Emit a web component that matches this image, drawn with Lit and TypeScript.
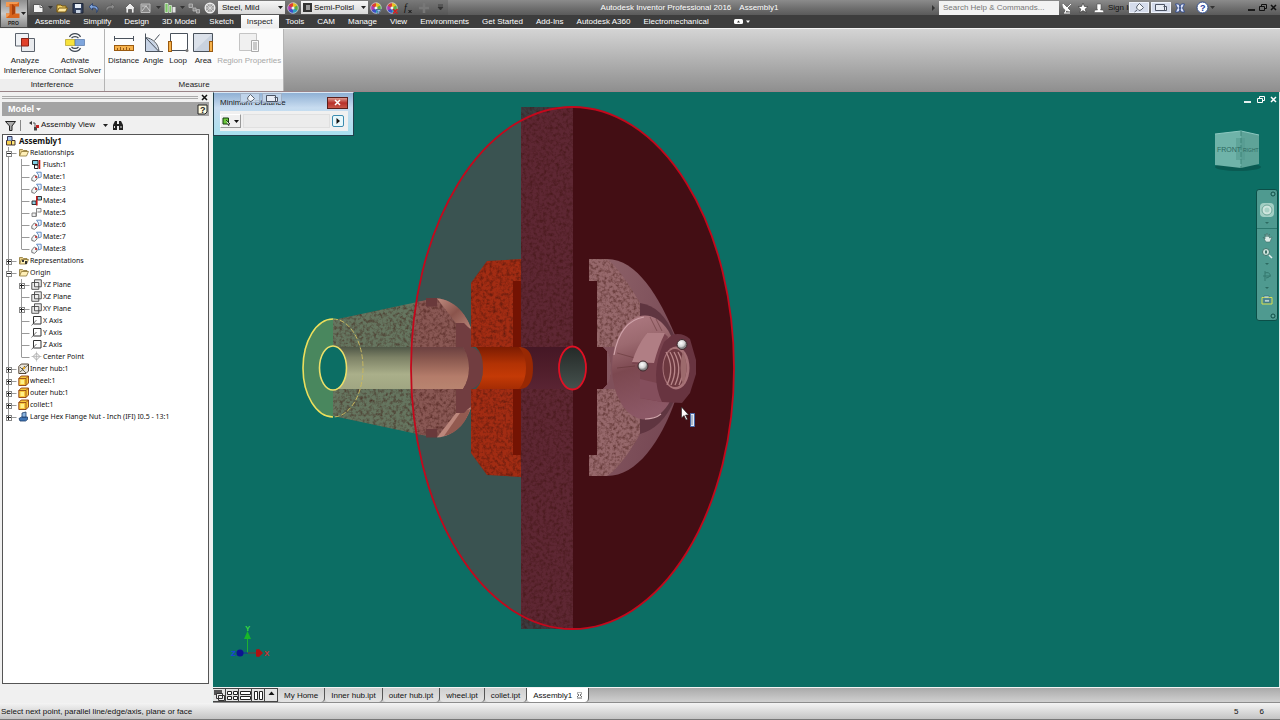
import { LitElement, html, svg, css, type TemplateResult, type SVGTemplateResult } from "lit";
import { customElement } from "lit/decorators.js";
import { classMap } from "lit/directives/class-map.js";

type Glyph = SVGTemplateResult;

const glyph = (w: number, h: number, body: Glyph) =>
  html`<svg width=${w} height=${h} viewBox="0 0 ${w} ${h}" aria-hidden="true">${body}</svg>`;

const wheel = svg`<path d="M7 7V1.5A5.5 5.5 0 0 1 11.8 4.2Z" fill="#e8c020"/><path d="M7 7L11.8 4.2A5.5 5.5 0 0 1 11.8 9.8Z" fill="#5fb040"/><path d="M7 7L11.8 9.8A5.5 5.5 0 0 1 7 12.5Z" fill="#2fa0c0"/><path d="M7 7V12.5A5.5 5.5 0 0 1 2.2 9.8Z" fill="#3c50c8"/><path d="M7 7L2.2 9.8A5.5 5.5 0 0 1 2.2 4.2Z" fill="#b03ab0"/><path d="M7 7L2.2 4.2A5.5 5.5 0 0 1 7 1.5Z" fill="#e04030"/><circle cx="7" cy="7" r="5.300" fill="none" stroke="#c4ccd6" stroke-width=".8"/><circle cx="7" cy="7" r="1.500" fill="#f4f4f4"/>`;

const quick: { name: string; icon?: Glyph; caret?: boolean; apart?: boolean }[] = [
  { name: "New", icon: svg`<path d="M2.500 3.500h7l2.500 2.500v5.500h-9.500z" fill="#f4f4f4" stroke="#555"/><path d="M9 3.500v3h3" fill="none" stroke="#777"/>` },
  { name: "New options", caret: true },
  { name: "Open", icon: svg`<path d="M2 11V4h4l1 1h4v2" fill="#f3d36b" stroke="#7b5b10"/><path d="M2 11l2-4h8.500l-2 4z" fill="#ffe79a" stroke="#7b5b10"/>` },
  { name: "Save", icon: svg`<path d="M2 2.500h10v9.500H2z" fill="#34425e" stroke="#1c2536"/><path d="M4 3h6v4H4z" fill="#e8eef6"/><path d="M5 9h4.500v3H5z" fill="#c8d4e4"/>` },
  { name: "Undo", icon: svg`<path d="M5.500 2.500L2 5.800l3.500 3.200V7C8.500 6.800 10 8 9.500 11.500 12.500 8 11 4.600 5.500 4.600Z" fill="#7fa4dc" stroke="#243a66" stroke-width=".8"/>` },
  { name: "Redo", icon: svg`<path d="M8.500 2.500L12 5.800 8.500 9V7C5.500 6.800 4 8 4.500 11.500 1.500 8 3 4.600 8.500 4.600Z" fill="#8a8a8a" stroke="#5c5c5c" stroke-width=".8"/>` },
  { name: "Home", apart: true, icon: svg`<path d="M1.500 7.500L7 2l5.500 5.500H11V12H8.500V8.500h-3V12H3V7.500z" fill="#eee" stroke="#555" stroke-width=".8"/>` },
  { name: "Drawing", icon: svg`<path d="M2 3h9v8.500H2z" fill="#888" stroke="#bbb"/><path d="M3 10l4-5 4 5M3 5h5" fill="none" stroke="#ccc"/>` },
  { name: "Drawing options", caret: true },
  { name: "Update", icon: svg`<path d="M2 2.500h3v9H2zM6 4.500h2.500v7H6z" fill="#7cc466" stroke="#e8f4e4" stroke-width=".7"/><path d="M9.500 6h3v5.500h-3z" fill="#e4e4e4"/>` },
  { name: "Update options", caret: true },
  { name: "Select", icon: svg`<path d="M2 3h3.500v3.500H2zM6 7h3v3H6zM9.500 8.500h3V12h-3z" fill="#888" stroke="#bdbdbd" stroke-width=".8"/>` },
  { name: "Material browser", icon: svg`<circle cx="7" cy="7" r="4.800" fill="#9a9a9a" stroke="#eee" stroke-width="1.400"/><path d="M4 4l6 6M10 4L4 10M7 3v8M3 7h8" stroke="#ddd" stroke-width=".8"/>` },
];

const quickAfter: { name: string; icon: Glyph }[] = [
  { name: "Adjust", icon: svg`${wheel}<path d="M7 8.500h5.500l-2 2v2.500h-1.500v-2.500z" fill="#9cc4f0" stroke="#335" stroke-width=".5"/>` },
  { name: "Clear", icon: svg`${wheel}<path d="M8 8l4.500 4.500m0-4.500l-4.500 4.500" stroke="#d02020" stroke-width="1.600"/>` },
];

const ribbonTabs = ["Assemble", "Simplify", "Design", "3D Model", "Sketch", "Inspect", "Tools", "CAM", "Manage", "View", "Environments", "Get Started", "Add-Ins", "Autodesk A360", "Electromechanical"];

const ruler = (x: number, y: number, w: number, h: number) =>
  svg`<rect x=${x} y=${y} width=${w} height=${h} fill="#f6b24c" stroke="#9a5a10"/>`;

const tools: { group: string; items: { label: string[]; icon: Glyph; off?: boolean }[] }[] = [
  {
    group: "Interference",
    items: [
      { label: ["Analyze", "Interference"], icon: svg`<path d="M1.500 1.500h13v12.500h-13z" fill="#f0f2f5" stroke="#5b626c"/><path d="M7.500 6.500H20.500v13H7.500z" fill="#e9ebee" stroke="#5b626c"/><path d="M7.500 6.500h7v7.500h-7z" fill="#e0402a" stroke="#8c2012"/>` },
      { label: ["Activate", "Contact Solver"], icon: svg`<path d="M1.500 7.500h9.500v6H1.500z" fill="#f7e23c" stroke="#a58f10" stroke-width=".6"/><path d="M11 7.500h9.500v6H11z" fill="#7fa6dd" stroke="#4468a0" stroke-width=".6"/><path d="M5.500 5C7.500 .5 14.500 .5 16.500 5M7.500 6.200C9 4 13 4 14.500 6.200M5.500 16c2 4.500 9 4.500 11 0M7.500 14.800c1.500 2.200 5.500 2.200 7 0" fill="none" stroke="#3d4652" stroke-width="1.200"/>` },
    ],
  },
  {
    group: "Measure",
    items: [
      { label: ["Distance"], icon: svg`<path d="M1.500 6.500h19M1.500 4v5M20.500 4v5" stroke="#4a525c" fill="none"/>${ruler(1.5, 13.5, 19, 5)}<path d="M4.500 16v2m3-3v3m3-2v2m3-3v3m3-2v2" stroke="#7a430a" stroke-width=".8"/>` },
      { label: ["Angle"], icon: svg`<path d="M4 6v13h12C15 12 10 7 4 6z" fill="#b9c8de" opacity=".8"/><path d="M3.500 1.500v18H21M3.500 5.500C11 6.500 16.500 12 17 19.500M3.500 5.500l13.500 14M12.500 8.500l5-6" fill="none" stroke="#4a525c"/>` },
      { label: ["Loop"], icon: svg`<path d="M3.500 1.500h17v17h-17z" fill="#fff" stroke="#4a525c"/>${ruler(1.5, 9.5, 3, 10)}<circle cx="20" cy="18.500" r="1.500" fill="#777"/>` },
      { label: ["Area"], icon: svg`<path d="M1.500 1.500h19v18h-19z" fill="#dbe1ea" stroke="#4a525c"/><path d="M2 19L20 2v17z" fill="#c9d2df"/>${ruler(17.5, 9.5, 3, 10)}` },
      { label: ["Region Properties"], off: true, icon: svg`<path d="M1.500 1.500h17v12h-5v5h-12z" fill="#f0f0f0" stroke="#c4c4c4"/><path d="M13.500 8.500h7v11h-7z" fill="#fafafa" stroke="#aaa"/><path d="M15 11h4m-4 2h4m-4 2h4m-4 2h4" stroke="#999"/>` },
    ],
  },
];

const folder = svg`<path d="M1.500 9V2.500h3l1 1h3.500V5" fill="#e9d08a" stroke="#8a7434" stroke-width=".8"/><path d="M1.500 9l2-4.500h7L8.500 9z" fill="#fff0b8" stroke="#8a7434" stroke-width=".8"/>`;
const mate = svg`<path d="M.800 7l2.500-3L6 5.500V8L3.500 10.300 .800 9.500z" fill="#f4f6f8" stroke="#555" stroke-width=".8"/><path d="M5.500 1.200h4.700V6L7.500 7V4z" fill="#e8f0fa" stroke="#4a78b8" stroke-width=".8"/><circle cx="5" cy="6" r="1" fill="#c02020"/>`;
const plane = svg`<path d="M.800 3.500h7V10.300h-7zM3.500.800h6.800v7H3.500z" fill="#ddd" fill-opacity=".5" stroke="#444" stroke-width=".9"/>`;
const axis = svg`<path d="M2.500 1.500h7.500V9H2.500z" fill="#fff" stroke="#333"/><path d="M.500 10.500l5-5.500" stroke="#555" stroke-width=".8"/>`;
const part = svg`<path d="M.800 3.500l2.400-2.500h7.300V8L8 10.500H.800z" fill="#f8c83c" stroke="#8c3c10" stroke-width=".9"/><path d="M.800 3.500H8v7M8 3.500l2.500-2.500" fill="none" stroke="#8c3c10" stroke-width=".8"/><path d="M2.500 5h3.500v4H2.500z" fill="#fff08a"/>`;
const icons: Record<string, Glyph> = {
  folder, mate, plane, axis, part,
  root: svg`<path d="M1.500 5.500h5V10h-5z" fill="#f6d04c" stroke="#433"/><path d="M6.500 5.500H10V10H6.500z" fill="#ffe678" stroke="#433"/><path d="M2.500 5.500v-4h4.500v4" fill="#a8c6ec" stroke="#335"/>`,
  reps: svg`${folder}<path d="M4 5h2v2H4zM7 6h2v3H7z" fill="#333"/>`,
  flush: svg`<path d="M1.500 1.500H7v4H1.500z" fill="#7fd0e4" stroke="#222"/><path d="M3.500 6H7v3.500H3.500z" fill="#fff" stroke="#222"/><path d="M8.500 1v9" stroke="#c01818" stroke-width="1.600"/>`,
  mate4: svg`<path d="M1 6h4v3.500H1z" fill="#8ecbe0" stroke="#222" stroke-width=".9"/><path d="M6 1.500H10.500V5H6.500z" fill="#8ecbe0" stroke="#222" stroke-width=".9"/><path d="M5.800 1v9.500" stroke="#c01818" stroke-width="1.600"/>`,
  mate5: svg`<path d="M1 6h4v3.500H1z" fill="#eee" stroke="#777" stroke-width=".9"/><path d="M5.500 9.500V1.500H10V5H6.500" fill="#f4f4f4" stroke="#777" stroke-width=".9"/>`,
  point: svg`<path d="M5.500 2l3.500 3.500L5.500 9 2 5.500z" fill="#eee" stroke="#999" stroke-width=".8"/><path d="M5.500.500v10M.500 5.500h10" stroke="#aaa" stroke-width=".6"/>`,
  hub: svg`<path d="M.800 3.500l2.400-2.500h7.300V8L8 10.500H.800z" fill="#e8e4dc" stroke="#443322" stroke-width=".9"/><path d="M2 9l8-7M2 4l6 6M4 6l3-3" stroke="#554" stroke-width=".9"/><circle cx="6" cy="5" r="1.200" fill="#f0b030"/>`,
  nut: svg`<path d="M1 7.500l2.500-1.500h6v2.500l-2 1.500H2z" fill="#3f74b4" stroke="#1c3c6a" stroke-width=".8"/><path d="M4 6V2l4-1v5z" fill="#8ab4e0" stroke="#1c3c6a" stroke-width=".8"/>`,
};

interface Node { text: string; icon: string; depth: number; box?: "+" | "-"; last?: boolean }
const n = (depth: number, text: string, icon: string, box?: "+" | "-", last = false): Node => ({ text, icon, depth, box, last });
const tree: Node[] = [
  n(0, "Assembly1", "root"),
  n(1, "Relationships", "folder", "-"),
  n(2, "Flush:1", "flush"), n(2, "Mate:1", "mate"), n(2, "Mate:3", "mate"), n(2, "Mate:4", "mate4"), n(2, "Mate:5", "mate5"),
  n(2, "Mate:6", "mate"), n(2, "Mate:7", "mate"), n(2, "Mate:8", "mate", undefined, true),
  n(1, "Representations", "reps", "+"),
  n(1, "Origin", "folder", "-"),
  n(2, "YZ Plane", "plane", "+"), n(2, "XZ Plane", "plane"), n(2, "XY Plane", "plane", "+"),
  n(2, "X Axis", "axis"), n(2, "Y Axis", "axis"), n(2, "Z Axis", "axis"), n(2, "Center Point", "point", undefined, true),
  n(1, "Inner hub:1", "hub", "+"), n(1, "wheel:1", "part", "+"), n(1, "outer hub:1", "part", "+"), n(1, "collet:1", "part", "+"),
  n(1, "Large Hex Flange Nut - Inch (IFI) I0.5 - 13:1", "nut", "+", true),
];

const pin = svg`<path d="M6 4l2.500-2.500 4 4L10 8l-2 .5L5.500 6zM6 8l-2.500 2" fill="#f4f6fa" stroke="#5c6470"/>`;
const monitor = svg`<path d="M2.500 2.500h9v6h-9zM10.500 4.500h3v4h-3" fill="#e8ecf4" stroke="#4c5464"/>`;
const restore = svg`<path d="M3.500 3.500V1.500h5v4h-2M1.500 3.500h5v4h-5z" fill="none" stroke="currentColor"/>`;
const cross = svg`<path d="M2 2l5 5M7 2L2 7" stroke="currentColor" stroke-width="1.500"/>`;
const minus = svg`<path d="M1 7h7" stroke="currentColor" stroke-width="1.800"/>`;

const base = css`
  :host { box-sizing: border-box; font-family: "Liberation Sans", Arial, sans-serif; font-size: 8px; line-height: 10px; }
  *, *::before { box-sizing: border-box; }
  svg { display: block; flex: none; }
  button, select, input { font: inherit; color: inherit; margin: 0; padding: 0; border: 0; background: none; border-radius: 0; }
  button { display: flex; align-items: center; justify-content: center; white-space: nowrap; }
  ul { list-style: none; margin: 0; padding: 0; }
`;

@customElement("inventor-header")
class InventorHeader extends LitElement {
  static styles = [base, css`
    :host { display: grid; grid-template-columns: 28px 1fr; grid-template-rows: 15px 13px; background: #3d3d3d; border-bottom: 1px solid #f4f4f4; flex: none; }
    .app { grid-row: 1 / 3; background: linear-gradient(#8e8e8e, #c8c8c8 50%, #8a8a8a); border: 1px solid #4a4a4a; border-top: 0; }
    .title { display: flex; align-items: center; background: linear-gradient(#8b8b8b, #6c6c6c 60%, #5a5a5a); padding-left: 2px; color: #fff; min-width: 0; }
    .quick { display: flex; align-items: center; height: 15px; background: linear-gradient(#7a7a7a, #555); }
    .quick button { width: 16px; height: 15px; }
    .quick .caret { width: 8px; }
    .quick .apart { margin-left: 4px; }
    .pick { position: relative; display: flex; color: #111; }
    .pick select { width: 67px; height: 13px; appearance: none; background: linear-gradient(#f6f6f6, #d8d8d8); padding-left: 4px; }
    .pick.swatch select { padding-left: 13px; }
    .pick svg { position: absolute; right: 2px; top: 4px; pointer-events: none; }
    .pick .chip { left: 2px; right: auto; top: 2px; }
    .name { flex: 1; display: flex; justify-content: center; gap: 8px; white-space: nowrap; min-width: 0; }
    .right { display: flex; align-items: center; color: #111; padding-right: 2px; }
    .right button { width: 16px; height: 13px; }
    .right .signin { width: 22px; justify-content: flex-start; padding-left: 1px; }
    .right .float { position: relative; width: 20px; height: 11px; background: #d5dcec; border: 1px solid #eef2fa; margin-right: 2px; }
    .right .exchange { width: 14px; }
    .search { width: 120px; height: 14px; background: #f2f2f2; color: #444; padding: 0 4px; }
    .search::placeholder { color: #777; opacity: 1; }
    .right .help { margin-left: 7px; }
    .wins { display: flex; gap: 2px; margin-left: 32px; }
    .right .wins button { width: 9px; }
    .tabs { display: flex; align-items: stretch; gap: 1px; padding-left: 1px; color: #fff; }
    .tabs button { padding: 0 6px; }
    .tabs .on { background: linear-gradient(#fff, #ececec); color: #222; }
    .tabs .more { margin-left: 12px; }
  `];
  render() {
    const down = (c: string) => glyph(5, 5, svg`<path d="M0 1h5L2.500 4z" fill=${c}/>`);
    return html`
      <button class="app" aria-label="Application menu">
        ${glyph(26, 27, svg`<path d="M5 2h13v4.500h-3.500v7h4V18H5v-4.500h3.500v-7H5z" fill="#d8641c"/><path d="M5 2h13l-2 2H8.500v11L5 18v-4.500h3.500v-7H5z" fill="#f39a52"/><path d="M11 4l3 2.500v7L11 15z" fill="#a8400c"/><path d="M20 12h5l-2.500 3z" fill="#222"/><text x="7" y="25" font-size="5" font-weight="bold" fill="#222">PRO</text>`)}
      </button>
      <div class="title">
        <div class="quick">
          ${quick.map((q) => html`<button class=${classMap({ caret: !!q.caret, apart: !!q.apart })} aria-label=${q.name}>${q.caret ? down("#333") : glyph(14, 14, q.icon!)}</button>`)}
          <label class="pick"><select aria-label="Material"><option>Steel, Mild</option></select>${down("#222")}</label>
          <button aria-label="Appearance browser">${glyph(14, 14, wheel)}</button>
          <label class="pick swatch"><select aria-label="Appearance"><option>Semi-Polisl</option></select>
            <svg class="chip" width="9" height="9" viewBox="0 0 9 9"><path d="M0 0h9v9H0z" fill="#333"/><path d="M3 2h4v5H3z" fill="#999"/></svg>${down("#222")}</label>
          ${quickAfter.map((q) => html`<button aria-label=${q.name}>${glyph(14, 14, q.icon)}</button>`)}
          <button aria-label="Parameters">${glyph(14, 14, svg`<text x="3" y="10" font-size="10" font-style="italic" font-family="Liberation Serif" fill="#111">f</text><path d="M7.500 9l3 3m0-3l-3 3" stroke="#111"/>`)}</button>
          <button aria-label="Add">${glyph(14, 14, svg`<path d="M7 2v10M2 7h10" stroke="#777" stroke-width="2.500"/>`)}</button>
          <button aria-label="Customize">${glyph(7, 7, svg`<path d="M1 1h5M1 3h5L3.500 6z" stroke="#333" fill="#333" stroke-width=".8"/>`)}</button>
        </div>
        <div class="name"><span>Autodesk Inventor Professional 2016</span><span>Assembly1</span></div>
        <div class="right">
          ${glyph(8, 8, svg`<path d="M1 1l3 3-3 3z" fill="#333"/>`)}
          <input class="search" aria-label="Search" placeholder="Search Help &amp; Commands..." />
          <button aria-label="Communication">${glyph(12, 12, svg`<path d="M2 2c0 5 3 7 7 7zM6 6l4-4M3 11h6M5 8l-1 3" fill="#fff" stroke="#fff"/>`)}</button>
          <button aria-label="Favorites">${glyph(12, 12, svg`<path d="M6 1l1.400 3.400 3.600.3-2.800 2.300.9 3.600L6 8.600l-3.100 2 .9-3.600L1 4.700l3.600-.3z" fill="#fff" stroke="#333" stroke-width=".6"/>`)}</button>
          <button aria-label="Account">${glyph(12, 12, svg`<path d="M4 2h4v4.500L7.500 8H10l1 2.500H1L2 8h2.500L4 6.500z" fill="#fff" stroke="#444" stroke-width=".5"/>`)}</button>
          <button class="signin">Sign In</button>
          <button class="float" aria-label="Pin">${glyph(16, 11, pin)}</button>
          <button class="float" aria-label="Display">${glyph(16, 11, monitor)}</button>
          <button class="exchange" aria-label="Exchange">${glyph(12, 12, svg`<path d="M1.500 2h3L7 6 4.500 10h-3l2-4zM10.500 2h-3L5 6l2.500 4h3l-2-4z" fill="#dfe6fa" stroke="#22408c" stroke-width=".8"/>`)}</button>
          <button class="help" aria-label="Help">${glyph(13, 13, svg`<circle cx="6.500" cy="6.500" r="5.500" fill="#fff" stroke="#2d4a8a"/><text x="4" y="10" font-size="9" font-weight="bold" fill="#1c3c9c">?</text>`)}</button>
          ${down("#333")}
          <div class="wins">
            <button aria-label="Minimize">${glyph(9, 9, minus)}</button>
            <button aria-label="Restore">${glyph(9, 9, restore)}</button>
            <button aria-label="Close">${glyph(9, 9, cross)}</button>
          </div>
        </div>
      </div>
      <nav class="tabs">
        ${ribbonTabs.map((t) => html`<button class=${classMap({ on: t === "Inspect" })}>${t}</button>`)}
        <button class="more" aria-label="Ribbon display">${glyph(16, 7, svg`<rect x="0" y="1" width="9" height="5" rx="1.500" fill="#fff"/><path d="M3 4.500h3L4.500 2.500z" fill="#333"/><path d="M12 2.500h4l-2 2.500z" fill="#fff"/>`)}</button>
      </nav>`;
  }
}

@customElement("inventor-ribbon")
class InventorRibbon extends LitElement {
  static styles = [base, css`
    :host { display: flex; background: linear-gradient(#d4d4d4, #8f8f8f); flex: none; height: 63px; border-bottom: 1px solid #9a8488; color: #222; }
    section { display: flex; flex-direction: column; background: #fcfcfc; border-right: 1px solid #b4b4b4; }
    .items { display: flex; flex: 1; padding: 2px 1px 0 2px; }
    .items button { flex-direction: column; justify-content: flex-start; padding: 0 1px; }
    .items.wide { padding: 2px 4px 0 0; }
    .wide button { width: 50px; }
    .row { gap: 1px; }
    .items svg { margin: 1px 0 3px; }
    .off { color: #a8a8a8; }
    h2 { margin: 0; font-size: 8px; font-weight: normal; line-height: 11px; height: 12px; text-align: center; background: #eeeeee; }
  `];
  render() {
    return html`${tools.map((g, i) => html`<section>
      <div class="items ${i ? "row" : "wide"}">
        ${g.items.map((t) => html`<button class=${classMap({ off: !!t.off })} ?disabled=${t.off}>${glyph(22, 21, t.icon)}${t.label.map((l) => html`<span>${l}</span>`)}</button>`)}
      </div>
      <h2>${g.group}</h2></section>`)}`;
  }
}

@customElement("model-browser")
class ModelBrowser extends LitElement {
  static styles = [base, css`
    :host { display: flex; flex-direction: column; width: 213px; flex: none; background: #f0f0f0; padding: 1px 3px 19px 2px; color: #111; border-right: 1px solid #e8f4f2; }
    .grip { display: flex; align-items: center; gap: 2px; height: 9px; }
    .grip i { flex: 1; height: 3px; border: 1px solid #aaa; border-width: 1px 0; }
    .bar { display: flex; align-items: center; justify-content: space-between; height: 14px; background: #a3a3a3; color: #fff; padding: 0 1px 0 6px; font-size: 9px; font-weight: bold; }
    .bar button { gap: 2px; }
    .view { display: flex; align-items: center; height: 18px; padding-left: 3px; }
    .view i { width: 1px; height: 11px; background: #888; margin: 0 8px 0 4px; }
    .view button { gap: 1px; }
    .view .drop { width: 13px; margin-left: 4px; }
    .tree { flex: 1; border: 1px solid #555; background: #fff; font-family: "Noto Sans", "Open Sans", sans-serif; font-size: 7px; line-height: 12px; min-height: 0; overflow: hidden; }
    li { display: flex; align-items: center; height: 12px; white-space: nowrap; }
    .root { font-size: 8px; font-weight: bold; padding-left: 2px; gap: 2px; line-height: 10px; }
  `];
  gutter(d: Node): TemplateResult | "" {
    if (!d.depth) return "";
    const deep = d.depth === 2;
    const x = deep ? 18 : 5;
    return glyph(deep ? 28 : 15, 12, svg`
      ${deep ? svg`<path d="M5.500 0v12" stroke="#999"/>` : ""}
      <path d="M${x + 0.5} 0V${d.last ? 6 : 12}M${x + 0.5} 6.500h8" stroke="#999" fill="none"/>
      ${d.box ? svg`<rect x=${x - 2 + 0.5} y="4.500" width="5" height="5" fill="#fff" stroke="#888"/><path d="M${x - 1} 6.500h4" stroke="#222"/>${d.box === "+" ? svg`<path d="M${x + 0.5} 5v4" stroke="#222"/>` : ""}` : ""}`);
  }
  render() {
    return html`
      <div class="grip"><i></i><button aria-label="Close panel">${glyph(9, 9, cross)}</button></div>
      <div class="bar"><button>Model ${glyph(5, 5, svg`<path d="M0 1h5L2.500 4z" fill="#fff"/>`)}</button>
        <button aria-label="Help">${glyph(11, 11, svg`<path d="M1 1h9v7l-2 2H1z" fill="#fffbe0" stroke="#222"/><text x="3" y="9" font-size="9" font-weight="bold" fill="#222">?</text>`)}</button></div>
      <div class="view">
        <button aria-label="Filter">${glyph(11, 11, svg`<path d="M.500 1.500h10L7 6v4.500H4.500V6z" fill="#aaa" stroke="#222"/>`)}</button><i></i>
        <button>${glyph(11, 11, svg`<path d="M0 3l3-2v4z" fill="#333"/><path d="M4 3h2v5" fill="none" stroke="#555"/><path d="M5 7h3v3.500H5z" fill="#444"/><path d="M7 5h3v3H7z" fill="#c02424"/>`)}Assembly View</button>
        <button class="drop" aria-label="Choose view">${glyph(5, 5, svg`<path d="M0 1h5L2.500 4z" fill="#222"/>`)}</button>
        <button aria-label="Find">${glyph(12, 11, svg`<path d="M1 10V5l2-4h2v3h2V1h2l2 4v5H7V6H5v4z" fill="#222"/><path d="M2.500 6v2M9 6v2" stroke="#ddd"/>`)}</button>
      </div>
      <ul class="tree" role="tree">
        ${tree.map((d) => html`<li role="treeitem" class=${classMap({ root: !d.depth })}>${this.gutter(d)}${glyph(12, 12, icons[d.icon])}<span>${d.text}</span></li>`)}
      </ul>`;
  }
}

@customElement("measure-dialog")
class MeasureDialog extends LitElement {
  static styles = [base, css`
    :host { display: flex; flex-direction: column; width: 141px; height: 44px; padding: 3px 5px 4px 6px; background: linear-gradient(#8fb0d4, #c8dcf0 35%, #a8e0ee); border: 1px solid #24404c; border-top-color: #dce8f4; color: #222; }
    header { position: relative; display: flex; align-items: center; justify-content: space-between; height: 13px; margin-bottom: 2px; }
    .close { width: 21px; height: 12px; background: linear-gradient(#dc9a90, #b8302a 50%, #c8584a); border: 1px solid #5c1f1c; color: #fff; }
    .float { position: absolute; top: -3px; width: 20px; height: 10px; background: rgba(200, 218, 238, 0.8); border: 1px solid #9fb0c6; }
    .pin { left: 20px; }
    .screen { left: 42px; }
    .body { display: flex; align-items: center; flex: 1; background: #f0f0f0; padding: 0 4px 0 0; gap: 2px; }
    .pick { width: 21px; height: 14px; border: 1px solid #999; border-top-color: #fff; border-left-color: #fff; gap: 3px; }
    input { flex: 1; min-width: 0; height: 14px; background: #ececec; border: 1px solid #e0e0e0; }
    .go { width: 12px; height: 12px; border: 1px solid #3c8cb0; background: #e8f8fc; border-radius: 2px; }
  `];
  render() {
    return html`
      <header><span>Minimum Distance</span>
        <button class="float pin" aria-label="Pin">${glyph(16, 11, pin)}</button>
        <button class="float screen" aria-label="Display">${glyph(16, 11, monitor)}</button>
        <button class="close" aria-label="Close">${glyph(9, 9, cross)}</button></header>
      <div class="body">
        <button class="pick" aria-label="Selection priority">${glyph(9, 9, svg`<path d="M1 1h5.500v6H1z" fill="#6cc83c" stroke="#163c10"/><path d="M4 3l4 4-2 .2L7 9" fill="#fff" stroke="#111" stroke-width=".8"/>`)}${glyph(5, 5, svg`<path d="M0 1h5L2.500 4z" fill="#111"/>`)}</button>
        <input aria-label="Measured value" />
        <button class="go" aria-label="More">${glyph(6, 8, svg`<path d="M1.500 1l3.500 3-3.500 3z" fill="#111"/>`)}</button>
      </div>`;
  }
}

@customElement("graphics-view")
class GraphicsView extends LitElement {
  static styles = [base, css`
    :host { display: block; position: relative; flex: 1; min-height: 0; background: #0c6e64; overflow: hidden; border-right: 1px solid #dfe8e6; }
    .scene { width: 100%; height: 100%; }
    measure-dialog { position: absolute; left: 0; top: 0; }
    .wins { position: absolute; right: 1px; top: 3px; display: flex; gap: 4px; color: #fff; }
    .cube { position: absolute; right: 17px; top: 37px; }
    .triad { position: absolute; left: 15px; bottom: 27px; }
    .nav { position: absolute; right: 1px; top: 97px; width: 22px; height: 132px; background: #4f9a90; border: 1px solid #0b4f48; border-radius: 3px; display: flex; flex-direction: column; align-items: center; padding-top: 12px; gap: 3px; }
    .nav hr { width: 100%; margin: 0; border: 0; border-top: 1px solid #2d786e; }
    .nav .tall { height: 14px; }
    .nav .screw { position: absolute; right: 1px; top: 1px; }
    .nav .low { top: auto; bottom: 1px; }
  `];
  render() {
    const threads = [667, 671, 675, 679];
    const tiny = glyph(4, 4, svg`<path d="M0 1h4L2 3z" fill="#2c6a61"/>`);
    return html`
      <svg class="scene" viewBox="213 92 1066 594" preserveAspectRatio="xMinYMin meet" role="img" aria-label="Sectioned wheel assembly">
        <defs>
          <filter id="grain" x="0" y="0" width="100%" height="100%" color-interpolation-filters="sRGB">
            <feTurbulence type="fractalNoise" baseFrequency="0.300" numOctaves="3" seed="4" result="t"/>
            <feColorMatrix in="t" values="0 0 0 0 0.220  0 0 0 0 0.060  0 0 0 0 0.040  0 0 0 -1.200 0.700" result="d"/>
            <feComposite in="d" in2="SourceGraphic" operator="in" result="c"/>
            <feMerge><feMergeNode in="SourceGraphic"/><feMergeNode in="c"/></feMerge>
          </filter>
          <clipPath id="disc"><ellipse cx="572.500" cy="368" rx="161.500" ry="261"/></clipPath>
          <linearGradient id="boreA" x2="0" y2="1"><stop stop-color="#4f5747"/><stop offset=".250" stop-color="#7d8266"/><stop offset=".650" stop-color="#aaaf8a"/><stop offset="1" stop-color="#a0a682"/></linearGradient>
          <linearGradient id="boreB" x2="0" y2="1"><stop stop-color="#6b4040"/><stop offset=".300" stop-color="#8c5a50"/><stop offset=".700" stop-color="#b47c6a"/><stop offset="1" stop-color="#b88470"/></linearGradient>
          <linearGradient id="boreC" x2="0" y2="1"><stop stop-color="#7c1c02"/><stop offset=".400" stop-color="#b23204"/><stop offset=".700" stop-color="#c43a06"/><stop offset="1" stop-color="#a42c04"/></linearGradient>
          <linearGradient id="boreD" x2="0" y2="1"><stop stop-color="#451725"/><stop offset=".500" stop-color="#4f1d2a"/><stop offset="1" stop-color="#5a2433"/></linearGradient>
          <linearGradient id="hole" x2="0" y2="1"><stop stop-color="#242927"/><stop offset="1" stop-color="#46524e"/></linearGradient>
          <linearGradient id="shell" x2="1" y2="1"><stop stop-color="#8c6067"/><stop offset="1" stop-color="#724350"/></linearGradient>
          <linearGradient id="flange" x2=".200" y2="1"><stop stop-color="#b07c84"/><stop offset=".300" stop-color="#9c6a70"/><stop offset=".550" stop-color="#7c4850"/><stop offset="1" stop-color="#8c5866"/></linearGradient>
          <linearGradient id="chamfer" x2="1" y2="1"><stop stop-color="#c08c80"/><stop offset=".500" stop-color="#8a544c"/><stop offset="1" stop-color="#b88478"/></linearGradient>
          <radialGradient id="ball" cx=".4" cy=".35"><stop stop-color="#fff"/><stop offset=".700" stop-color="#d4d4d4"/><stop offset="1" stop-color="#888"/></radialGradient>
        </defs>
        <g clip-path="url(#disc)">
          <path d="M410 100h112v540H410z" fill="#3a5351"/>
          <path d="M572 100h170v540H572z" fill="#430e14"/>
        </g>
        <path d="M521 107h52v522h-52z" fill="#3c3c40" filter="url(#grain)"/>
        <g clip-path="url(#disc)"><path d="M521 107h52v522h-52z" fill="#5e2733" filter="url(#grain)"/></g>
        <path d="M521 347h52v42h-52z" fill="url(#boreD)"/>

        <path d="M333 320l89-19 15-3c18 3 29 17 34 30v80c-5 14-16 26-34 29l-15-2-89-19z" fill="#65755f" filter="url(#grain)"/>
        <g clip-path="url(#disc)">
          <path d="M400 305.500l22-4.500 15-3c18 3 29 17 34 30v80c-5 14-16 26-34 29l-15-2-22-5z" fill="#895854" filter="url(#grain)"/>
        </g>
        <path d="M333 347h79v42h-79z" fill="url(#boreA)"/>
        <path d="M411.500 347H463Q469 356 469 368T463 389H411.500z" fill="url(#boreB)"/>
        <path d="M426 298h11v8.500h-11zM426 429h11v8.500h-11z" fill="#69393b"/>
        <path d="M437 298.500c17 1 29 15 34 30L456 323z" fill="url(#chamfer)"/>
        <path d="M437 437.500c17-1 29-15 34-30L456 413z" fill="#bc877c"/><path d="M444 436c14-3 23-15 26-27l-10 4z" fill="#925a50"/>
        <path d="M456 323h8l7 7v17q12 3 12 21t-12 21v17l-7 7h-8v-24h7q6-9 6-21t-6-21h-7z" fill="#713d40"/>

        <path d="M471 283l16-22 34-2v88h-50zM471 389h50v88l-34-2-16-22z" fill="#a22c13" filter="url(#grain)"/>
        <path d="M513 281h8v66h-8zM513 389h8v66h-8z" fill="#741303"/>
        <path d="M521 347c8 1 12 8 12 21s-4 20-12 21h-8v-42z" fill="#982803"/>
        <path d="M476 347H519Q526 355 526 368T519 389H476Q483 382 483 368T476 347z" fill="url(#boreC)"/>

        <ellipse cx="572.500" cy="368" rx="161.500" ry="261" fill="none" stroke="#c4081c" stroke-width="1.800"/>
        <path d="M573 347h30q8 6 8 21t-8 21h-30z" fill="#430e14"/>
        <ellipse cx="572.500" cy="368" rx="13.500" ry="21.500" fill="url(#hole)" stroke="#e01024" stroke-width="1.800"/>

        <path d="M607 259c30 0 52 38 68 76v66c-14 40-38 75-68 75z" fill="url(#shell)"/>
        <path d="M640 303q22 3 34 32v66q-12 27-34 33z" fill="#5f3540"/>
        <path d="M589 259h18q13 10 33 44v131q-18 32-33 42h-18v-21h8v-66h6q8-6 8-21t-8-21h-6v-66h-8z" fill="#96686b" filter="url(#grain)"/>
        <path d="M603 347h15v42h-15q8-6 8-21t-8-21z" fill="#80505a"/>
        <ellipse cx="645" cy="367.500" rx="33" ry="52" fill="url(#flange)"/>
        <path d="M614 355q6-34 30-38M645 419q10 0 16-5" fill="none" stroke="#cfa4aa" stroke-width="1.200"/>
        <path d="M617 353l18 5M617 368l18-2M650 317l7 14M656 319l6 12" stroke="#5d3032" stroke-width="1" fill="none" opacity=".5"/>
        <path d="M647 333l17 0 4 4-12 40 6 25-22-4V364h-8z" fill="#79434e"/>
        <path d="M647 333h18q-7 14-11 30l-22-1q5-16 15-29z" fill="#b07e84"/>
        <path d="M640 379l17 4 5 19-22-4z" fill="#844e5c"/>
        <path d="M664 342l8-7q10-3 18 4l6 21v14l-6 19-8 10-20-1q-6-12-6-27t8-33z" fill="#683440"/>
        <ellipse cx="676" cy="368" rx="13.500" ry="21.500" fill="#a87378"/>
        <ellipse cx="675" cy="368" rx="11.500" ry="19" fill="#6d3940"/>
        ${threads.map((x) => svg`<path d="M${x - 1} 352q9 16 1 33" fill="none" stroke="#b9878a" stroke-width="1.300"/>`)}
        <path d="M683 351q7 17 0 34-5-17 0-34z" fill="#9c6a6c"/>

        <path d="M333 319A30 49 0 0 0 333 417z" fill="#49875e"/>
        <ellipse cx="333" cy="368" rx="13.500" ry="22" fill="#0c6e64" stroke="#ecdf6a" stroke-width="1.600"/>
        <path d="M333 319A30 49 0 0 0 333 417" fill="none" stroke="#ecdf5c" stroke-width="1.600"/>
        <path d="M333 319A30 49 0 0 1 333 417" fill="none" stroke="#c8b860" stroke-width="1" stroke-dasharray="5 2"/>

        <g fill="url(#ball)" stroke="#40282c"><circle cx="643" cy="366" r="5"/><circle cx="682" cy="344.500" r="5"/></g>
        <path d="M681.500 407v11l2.500-2.500 2 4.500 1.500-.8-2-4.200h3.200z" fill="#fff" stroke="#222" stroke-width=".6"/>
        <path d="M690.500 413.500h4v13h-4z" fill="#e4ecf8" stroke="#4868a8"/><path d="M691 416h2m-2 2h2m-2 2h2m-2 2h2m-2 2h2" stroke="#345" stroke-width=".6"/>
      </svg>
      <div class="wins">
        <button aria-label="Minimize">${glyph(9, 9, minus)}</button>
        <button aria-label="Restore">${glyph(9, 9, restore)}</button>
        <button aria-label="Close">${glyph(9, 9, cross)}</button>
      </div>
      <svg class="cube" width="48" height="46" viewBox="0 0 48 46" role="img" aria-label="View cube">
        <ellipse cx="24" cy="38" rx="23" ry="4" fill="#0a5a52"/>
        <path d="M1 5l26-3v37L1 36z" fill="#6fb3a9"/><path d="M27 2l18 4v29l-18 4z" fill="#5ea398"/><path d="M1 5l26-3 18 4" fill="none" stroke="#8cc8c0"/>
        <path d="M22 9h9v22h-9z" fill="#559a8f" opacity=".6"/><path d="M27 2v37" stroke="#3f8579" stroke-dasharray="5 2"/>
        <text x="3" y="23" font-size="7" fill="#2c6860">FRONT</text><text x="29" y="23" font-size="5" fill="#2c6860">RIGHT</text>
      </svg>
      <svg class="triad" width="44" height="36" viewBox="0 0 44 36" role="img" aria-label="Axis triad" font-size="8" font-weight="bold">
        <path d="M19.500 29V12" stroke="#20b030" /><path d="M16 15h7l-3.500-8z" fill="#18b828"/>
        <path d="M10 29h10" stroke="#1828a0"/><path d="M20 29h10" stroke="#7c3030"/>
        <circle cx="12" cy="29" r="3.500" fill="#0c1490"/><path d="M28 25.500l3-.5 4 4-4 4-3-.5z" fill="#b01010"/>
        <text x="17" y="7" fill="#38d840">Y</text><text x="3" y="32" fill="#1c3ce0">Z</text><text x="36" y="32" fill="#c83030">X</text>
      </svg>
      <div class="nav">
        <button class="screw" aria-label="Close bar">${glyph(6, 6, svg`<circle cx="3" cy="3" r="2" fill="#5fa79d" stroke="#0d4d46"/>`)}</button>
        <button aria-label="Steering wheel">${glyph(16, 16, svg`<rect x="1" y="1" width="14" height="14" rx="4" fill="#a3cfc4"/><circle cx="8" cy="8" r="5" fill="#cfe6de" stroke="#6fa598"/><circle cx="8" cy="8" r="2.500" fill="#a9d2c6"/>`)}</button>
        ${tiny}
        <hr />
        <button aria-label="Pan">${glyph(12, 12, svg`<path d="M2 5l2 2V2l1 3 1-4 1 4 1.500-3v4L11 5 9 10H5z" fill="#dcebe6" stroke="#3c6c64" stroke-width=".6"/>`)}</button>
        <button aria-label="Zoom">${glyph(12, 12, svg`<circle cx="5" cy="5" r="3.500" fill="#cfe4de" stroke="#40736a"/><path d="M8 8l3 3" stroke="#e8f0ee" stroke-width="1.500"/><path d="M4 3.500h2v3H4z" fill="#40736a"/>`)}</button>
        ${tiny}
        <button class="tall" aria-label="Orbit">${glyph(12, 12, svg`<path d="M4 1v10M4 3c5-2 8 4 1 5M2 6h8" fill="none" stroke="#34786e"/>`)}</button>
        ${tiny}
        <button class="tall" aria-label="Look at">${glyph(12, 10, svg`<path d="M1 2.500h10v6.500H1z" fill="#4a8a90" stroke="#d8e050"/><path d="M3 2.500V1h5v1.500M3.500 4.500h5v2.500h-5z" fill="#b4d4d4" stroke="#246" stroke-width=".4"/>`)}</button>
        <button class="screw low" aria-label="Bar options">${glyph(6, 6, svg`<circle cx="3" cy="3" r="2" fill="#5fa79d" stroke="#0d4d46"/>`)}</button>
      </div>
      <measure-dialog role="dialog" aria-label="Minimum Distance"></measure-dialog>`;
  }
}

@customElement("document-tabs")
class DocumentTabs extends LitElement {
  static styles = [base, css`
    :host { display: flex; height: 16px; flex: none; background: linear-gradient(#aaa, #d0d0d0); border-top: 1px solid #f4f4f4; border-bottom: 1px solid #8c8c8c; color: #111; }
    .tile { width: 13px; background: #e4e4e4; border: 1px solid #444; border-left-width: 0; }
    .tab { padding: 2px 6px 0; background: linear-gradient(#cfcfcf, #e4e4e4); border-right: 1px solid #555; border-bottom-right-radius: 4px; border-bottom-left-radius: 4px; gap: 4px; }
    .on { background: #fff; padding-right: 5px; }
  `];
  render() {
    const tiles: [string, Glyph][] = [
      ["Cascade", svg`<path d="M0 0h8v5H0z" fill="#555"/><path d="M2.500 3.500h6v5h-6zM4.500 5.500h6v5h-6z" fill="#eee" stroke="#333"/>`],
      ["Grid", svg`<path d="M.500 1.500h4v3h-4zM6.500 1.500h4v3h-4zM.500 6.500h4v3h-4zM6.500 6.500h4v3h-4z" fill="#fff" stroke="#222"/>`],
      ["Rows", svg`<path d="M.500 1.500h10v3H.500zM.500 6.500h10v3H.500z" fill="#fff" stroke="#222"/>`],
      ["Columns", svg`<path d="M1.500 1.500h3v8h-3zM6.500 1.500h3v8h-3z" fill="#fff" stroke="#222"/>`],
      ["Expand", svg`<path d="M2.500 5h6L5.500 1.500z" fill="#111"/>`],
    ];
    return html`${tiles.map(([name, g]) => html`<button class="tile" aria-label=${name}>${glyph(11, 11, g)}</button>`)}
      ${["My Home", "Inner hub.ipt", "outer hub.ipt", "wheel.ipt", "collet.ipt"].map((t) => html`<button class="tab">${t}</button>`)}
      <button class="tab on">Assembly1 ${glyph(7, 8, svg`<path d="M1 0h5M1 1.500l2 1.500-2 2M6 1.500L4 3l2 2M1 6h5" fill="none" stroke="#444" stroke-width=".8"/>`)}</button>`;
  }
}

@customElement("app-root")
class AppRoot extends LitElement {
  static styles = [base, css`
    :host { display: flex; flex-direction: column; height: 100vh; overflow: hidden; background: #f0f0f0; }
    main { flex: 1; display: flex; min-height: 0; }
    .work { flex: 1; display: flex; flex-direction: column; min-width: 0; }
    footer { display: flex; align-items: center; height: 17px; flex: none; padding: 2px 16px 0 1px; background: linear-gradient(#f4f4f4, #c4c4c4); border-bottom: 1px solid #777; color: #111; }
    footer p { margin: 0; flex: 1; }
    footer span + span { margin-left: 21px; }
  `];
  render() {
    return html`
      <inventor-header></inventor-header>
      <inventor-ribbon></inventor-ribbon>
      <main>
        <model-browser></model-browser>
        <div class="work"><graphics-view></graphics-view><document-tabs></document-tabs></div>
      </main>
      <footer><p>Select next point, parallel line/edge/axis, plane or face</p><span>5</span><span>6</span></footer>`;
  }
}
